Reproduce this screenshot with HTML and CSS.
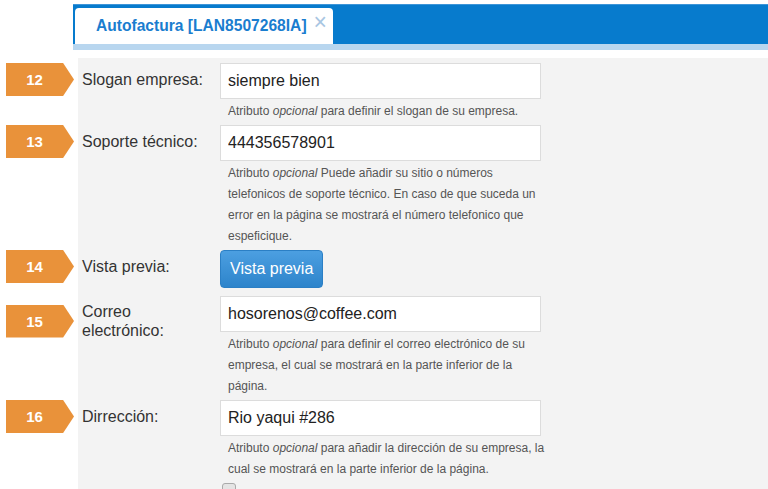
FILE: index.html
```html
<!DOCTYPE html>
<html lang="es">
<head>
<meta charset="utf-8">
<title>Autofactura</title>
<link rel="stylesheet" href="styles.css">
</head>
<body>
<div class="header">
  <div class="tabbar">
    <div class="tab">
      <span class="tab-title">Autofactura [LAN8507268IA]</span>
      <span class="tab-close">×</span>
    </div>
  </div>
  <div class="stripe"></div>
</div>
<div class="main">
  <div class="row">
    <div class="head">
      <div class="badge">12</div>
      <div class="label">Slogan empresa:</div>
    </div>
    <div class="field">
      <input class="input" type="text" value="siempre bien">
      <p class="help">Atributo <em>opcional</em> para definir el slogan de su empresa.</p>
    </div>
  </div>
  <div class="row">
    <div class="head">
      <div class="badge">13</div>
      <div class="label">Soporte técnico:</div>
    </div>
    <div class="field">
      <input class="input" type="text" value="444356578901">
      <p class="help">Atributo <em>opcional</em> Puede añadir su sitio o números telefonicos de soporte técnico. En caso de que suceda un error en la página se mostrará el número telefonico que espeficique.</p>
    </div>
  </div>
  <div class="row row-button">
    <div class="head">
      <div class="badge">14</div>
      <div class="label">Vista previa:</div>
    </div>
    <div class="field">
      <button class="btn" type="button">Vista previa</button>
    </div>
  </div>
  <div class="row">
    <div class="head">
      <div class="badge">15</div>
      <div class="label">Correo electrónico:</div>
    </div>
    <div class="field">
      <input class="input" type="text" value="hosorenos@coffee.com">
      <p class="help">Atributo <em>opcional</em> para definir el correo electrónico de su empresa, el cual se mostrará en la parte inferior de la página.</p>
    </div>
  </div>
  <div class="row row-last">
    <div class="head">
      <div class="badge">16</div>
      <div class="label">Dirrección:</div>
    </div>
    <div class="field">
      <input class="input" type="text" value="Rio yaqui #286">
      <p class="help">Atributo <em>opcional</em> para añadir la dirección de su empresa, la cual se mostrará en la parte inferior de la página.</p>
      <div class="check"></div>
    </div>
  </div>
</div>
</body>
</html>
```
FILE: styles.css
```css
* { box-sizing: border-box; }
html, body {
  margin: 0;
  padding: 0;
  background: #fff;
  font-family: "Liberation Sans", Arial, sans-serif;
  overflow: hidden;
}
.header {
  padding-top: 4px;
}
.tabbar {
  margin-left: 73px;
  height: 40px;
  background: #077bcd;
  border-top: 1px solid #3d95d8;
  padding: 3px 0 0 2px;
  display: flex;
}
.tab {
  width: 258px;
  height: 36px;
  background: #fff;
  border-radius: 4px 4px 0 0;
  display: flex;
  align-items: center;
  padding-left: 21px;
}
.tab-title {
  color: #1a7dcf;
  font-weight: bold;
  font-size: 15.6px;
}
.tab-close {
  color: #a9c6e2;
  font-size: 23px;
  line-height: 1;
  margin-left: 7px;
  margin-top: -8px;
}
.stripe {
  margin-left: 73px;
  height: 6px;
  background: #b8d6ef;
}
.main {
  margin-top: 8px;
  padding-top: 5px;
  background: linear-gradient(to right, #fff 78px, #f3f3f3 78px);
  min-height: 440px;
}
.row {
  display: grid;
  grid-template-columns: 220px 321px;
  align-items: start;
  margin-bottom: 3px;
}
.row-button {
  margin-bottom: 8px;
}
.row-last {
  margin-top: 2px;
}
.head {
  display: flex;
  align-items: center;
  min-height: 33px;
}
.badge {
  flex: none;
  margin-left: 6px;
  width: 68px;
  height: 33px;
  background: #e9923a;
  clip-path: polygon(0 0, 84% 0, 100% 50%, 84% 100%, 0 100%);
  color: #fff;
  font-weight: bold;
  font-size: 15px;
  display: flex;
  align-items: center;
  justify-content: center;
  padding-right: 11px;
}
.label {
  margin-left: 8px;
  width: 132px;
  padding: 6px 0;
  font-size: 16px;
  line-height: 19px;
  color: #333;
}
.field {
  display: flex;
  flex-direction: column;
  align-items: flex-start;
}
.input {
  width: 321px;
  height: 36px;
  margin: 0;
  border: 1px solid #dcdcdc;
  background: #fff;
  padding: 0 7px;
  font-family: inherit;
  font-size: 16px;
  color: #222;
  outline: none;
}
.help {
  margin: 2px 0 0;
  padding-left: 8px;
  width: 326px;
  font-size: 12px;
  line-height: 21px;
  color: #555;
}
.btn {
  height: 38px;
  margin: 0;
  padding: 0 9px;
  border: 1px solid #2b7fc5;
  border-radius: 4px;
  background: linear-gradient(#4c9fe1, #2d84cb);
  color: #fff;
  font-family: inherit;
  font-size: 16px;
}
.check {
  margin: 3px 0 0 2px;
  width: 14px;
  height: 14px;
  border: 1px solid #aaa;
  border-radius: 3px;
  background: #e4e4e4;
}
```
